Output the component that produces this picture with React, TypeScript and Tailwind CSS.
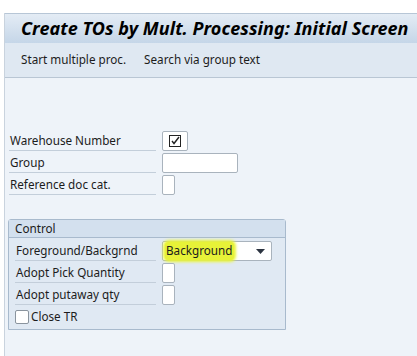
import React from 'react';

function FieldRow({
  label,
  children,
  width = 'w-[147px]',
}: {
  label: string;
  children?: React.ReactNode;
  width?: string;
}) {
  return (
    <div className="flex items-center h-[22px]">
      <div className={`${width} h-[20px] flex items-center pl-[1px] border-b border-[#c3ceda] text-[#1c1c1c]`}>
        {label}
      </div>
      <div className="ml-[6px] flex items-center">{children}</div>
    </div>
  );
}

function Box({ className }: { className: string }) {
  return <div className={`h-[20px] bg-white border border-[#a9b3bd] rounded-[2px] ${className}`} />;
}

export default function App() {
  return (
    <div
      className="w-[417px] h-[356px] bg-white overflow-hidden text-[11.7px]"
      style={{ fontFamily: '"Noto Sans", "DejaVu Sans", sans-serif' }}
    >
      <div className="h-[13px] bg-white" />
      <div className="ml-[4px] h-[343px] bg-[#eef3f9] border-l border-[#c9d3de]">
        {/* Title bar */}
        <div className="h-[30px] border-t border-[#b7c6d6] bg-gradient-to-b from-[#e4ecf5] to-[#c5d6e8] flex items-center pl-[16px] whitespace-nowrap">
          <span className="text-[18px] font-bold italic text-black tracking-[0.06px]">
            Create TOs by Mult. Processing: Initial Screen
          </span>
        </div>
        {/* Toolbar */}
        <div className="h-[35px] bg-[#dfe8f2] border-b border-[#b9c6d4] flex items-center pl-[16px] gap-[18px] text-[#1c1c1c]">
          <span>Start multiple proc.</span>
          <span>Search via group text</span>
        </div>

        <div className="pt-[52px] pl-[4px]">
          <FieldRow label="Warehouse Number">
            <div className="w-[26px] h-[20px] bg-white border border-[#a9b3bd] rounded-[2px] flex items-center justify-center">
              <svg width="12" height="12" viewBox="0 0 12 12">
                <rect x="0.5" y="0.5" width="11" height="11" fill="none" stroke="#222" />
                <path d="M3 6 L5 8.5 L10 2" fill="none" stroke="#222" strokeWidth="1.4" />
              </svg>
            </div>
          </FieldRow>
          <FieldRow label="Group">
            <Box className="w-[76px]" />
          </FieldRow>
          <FieldRow label="Reference doc cat.">
            <Box className="w-[13px]" />
          </FieldRow>
        </div>

        {/* Control group */}
        <div className="mt-[23px] ml-[3px] w-[278px] h-[111px] border border-[#a8bacd] rounded-t-[3px] bg-[#e0e9f3]">
          <div className="h-[18px] bg-[#d3e0ee] border-b border-[#a8bacd] flex items-center pl-[6px] text-[#1c1c1c]">
            Control
          </div>
          <div className="pl-[6px] pt-[2px]">
            <FieldRow label="Foreground/Backgrnd" width="w-[141px]">
              <div className="w-[110px] h-[20px] bg-white border border-[#a9b3bd] rounded-[2px] flex items-center justify-between pl-[2px] pr-[6px]">
                <span className="bg-[#e7f238] rounded-[4px] px-[1px] text-[#1c1c1c] shadow-[0_0_3px_2px_#eaf53a]">
                  Background
                </span>
                <svg width="9" height="5" viewBox="0 0 9 5">
                  <path d="M0 0 H9 L4.5 5 Z" fill="#2b3340" />
                </svg>
              </div>
            </FieldRow>
            <FieldRow label="Adopt Pick Quantity" width="w-[141px]">
              <Box className="w-[13px]" />
            </FieldRow>
            <FieldRow label="Adopt putaway qty" width="w-[141px]">
              <Box className="w-[13px]" />
            </FieldRow>
            <div className="flex items-center h-[22px] gap-[2px]">
              <div className="w-[14px] h-[14px] bg-white border border-[#8a949e] rounded-[2px]" />
              <span className="text-[#1c1c1c]">Close TR</span>
            </div>
          </div>
        </div>
      </div>
    </div>
  );
}
